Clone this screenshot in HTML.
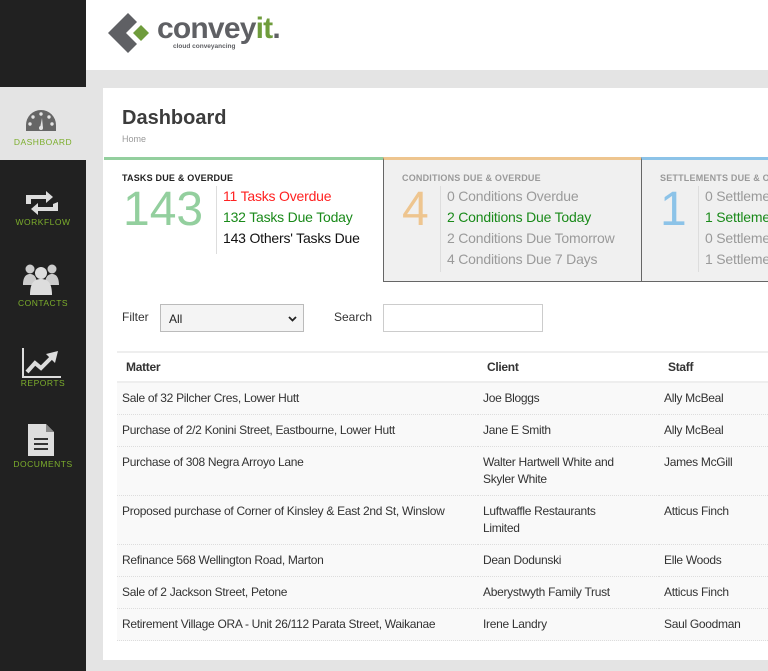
<!DOCTYPE html>
<html><head><meta charset="utf-8"><style>
*{margin:0;padding:0;box-sizing:border-box}
body{width:768px;height:671px;overflow:hidden;background:#e4e4e4;font-family:"Liberation Sans",sans-serif;position:relative}
.a{position:absolute}
#top{left:0;top:0;width:768px;height:70px;background:#fff}
#blk{left:0;top:0;width:86px;height:87px;background:#212121}
#side{left:0;top:160px;width:86px;height:511px;background:#212121}
#act{left:0;top:87px;width:86px;height:73px;background:#e4e4e4}
.nav{position:absolute;left:0;width:86px;text-align:center;font-size:8.5px;color:#7cae2c;letter-spacing:.5px}
#panel{left:103px;top:88px;width:665px;height:572px;background:#fff}
h1{position:absolute;left:122px;top:107px;font-size:20px;color:#3c3c3c;font-weight:bold}
.tab{position:absolute;top:157px;height:125px}
.tt{position:absolute;top:13px;left:18px;font-size:9px;font-weight:bold;letter-spacing:.2px}
.big{position:absolute;font-size:48px;top:22px}
.lst{position:absolute;top:26px;border-left:1px solid #ddd;padding-left:6px;font-size:14px;line-height:21px;letter-spacing:-.2px}
.g{color:#9a9a9a}
td,th{font-size:12px;color:#333;letter-spacing:-.3px;text-align:left;vertical-align:top}
table{position:absolute;left:117px;top:351px;width:651px;border-collapse:collapse}
th{padding:7px 5px 7px 9px;line-height:14px;font-weight:bold;background:#fff;border-top:2px solid #eee;border-bottom:2px solid #eee}
td{background:#f9f9f9;padding:7px 5px;line-height:17px;border-bottom:1px dotted #ddd}
td:nth-child(2){padding-right:40px}
</style></head><body>
<div class="a" id="top"></div>
<div class="a" id="blk"></div>
<div class="a" id="act"></div>
<div class="a" id="side"></div>
<svg class="a" style="left:108px;top:11px" width="46" height="46" viewBox="0 0 46 46">
<polygon points="0,22 20,2 29,11 18,22 29,33 20,42" fill="#5f6064"/>
<polygon points="33,14 41,22 33,30 25,22" fill="#6f9c3c"/>
</svg>
<div class="a" style="left:157px;top:12px;font-size:30px;font-weight:bold;color:#5f6064;letter-spacing:-.8px">convey<span style="color:#6f9c3c">it</span>.</div>
<div class="a" style="left:173px;top:43px;font-size:6.5px;font-weight:bold;color:#5f6064">cloud conveyancing</div>
<svg class="a" style="left:25px;top:109px" width="32" height="24" viewBox="0 0 32 24"><path d="M16 1A15 15 0 0 0 1 16v6h30v-6A15 15 0 0 0 16 1z" fill="#666"/><circle cx="16" cy="5" r="1.7" fill="#e4e4e4"/><circle cx="8" cy="8" r="1.7" fill="#e4e4e4"/><circle cx="24" cy="8" r="1.7" fill="#e4e4e4"/><circle cx="5" cy="15" r="1.7" fill="#e4e4e4"/><circle cx="27" cy="15" r="1.7" fill="#e4e4e4"/><path d="M17 9l-2 10h3z" fill="#e4e4e4"/><circle cx="16" cy="19" r="2" fill="#e4e4e4"/></svg>
<div class="nav" style="top:137px">DASHBOARD</div>
<svg class="a" style="left:24px;top:190px" width="36" height="26" viewBox="0 0 36 26"><path d="M2 14V5h20V1l7 6-7 6V9H7v5z M34 12v9H14v4l-7-6 7-6v4h15v-3z" fill="#ddd"/></svg>
<div class="nav" style="top:217px">WORKFLOW</div>
<svg class="a" style="left:22px;top:263px" width="38" height="32" viewBox="0 0 38 32"><circle cx="8" cy="6" r="4.5" fill="#ccc"/><circle cx="30" cy="6" r="4.5" fill="#ccc"/><path d="M1 22c0-8 3-11 7-11s7 3 7 11z M23 22c0-8 3-11 7-11s7 3 7 11z" fill="#ccc"/><circle cx="19" cy="10" r="6" fill="#ddd"/><path d="M8 32c0-12 4-16 11-16s11 4 11 16z" fill="#ddd"/></svg>
<div class="nav" style="top:298px">CONTACTS</div>
<svg class="a" style="left:22px;top:348px" width="40" height="30" viewBox="0 0 40 30"><path d="M1 0v29h38" stroke="#ddd" stroke-width="2" fill="none"/><path d="M5 24l8-9 6 5 10-10" stroke="#ddd" stroke-width="4" fill="none"/><polygon points="24,6 36,3 33,15" fill="#ddd"/></svg>
<div class="nav" style="top:378px">REPORTS</div>
<svg class="a" style="left:26px;top:424px" width="30" height="32" viewBox="0 0 30 32"><path d="M2 0h18l8 8v24H2z" fill="#ddd"/><path d="M20 0v8h8" fill="#888"/><path d="M8 15h14M8 20h14M8 25h14" stroke="#333" stroke-width="2"/></svg>
<div class="nav" style="top:459px">DOCUMENTS</div>
<div class="a" id="panel"></div>
<h1>Dashboard</h1>
<div class="a" style="left:122px;top:134px;font-size:9px;color:#999">Home</div>
<div class="tab" style="left:104px;width:279px;background:#fff;border-top:3px solid #93cf9e">
<div class="tt" style="color:#222">TASKS DUE &amp; OVERDUE</div>
<div class="big" style="left:19px;color:#93cf9e">143</div>
<div class="lst" style="left:112px;height:68px"><div style="color:#f22">11 Tasks Overdue</div><div style="color:#1a8a1a">132 Tasks Due Today</div><div style="color:#111">143 Others' Tasks Due</div></div>
</div>
<div class="tab" style="left:383px;width:258px;background:#f0f0f0;border-top:3px solid #eec58f;border-left:1px solid #666;border-bottom:1px solid #666">
<div class="tt" style="color:#999">CONDITIONS DUE &amp; OVERDUE</div>
<div class="big" style="left:18px;color:#eec58f">4</div>
<div class="lst g" style="left:56px;height:86px"><div>0 Conditions Overdue</div><div style="color:#1a8a1a">2 Conditions Due Today</div><div>2 Conditions Due Tomorrow</div><div>4 Conditions Due 7 Days</div></div>
</div>
<div class="tab" style="left:641px;width:127px;background:#f0f0f0;border-top:3px solid #8cc3e8;border-left:1px solid #666;border-bottom:1px solid #666;overflow:hidden">
<div class="tt" style="color:#999;white-space:nowrap">SETTLEMENTS DUE &amp; OVERDUE</div>
<div class="big" style="left:18px;color:#8cc3e8">1</div>
<div class="lst g" style="left:56px;height:86px;white-space:nowrap"><div>0 Settlements Overdue</div><div style="color:#1a8a1a">1 Settlements Due Today</div><div>0 Settlements Due Tomorrow</div><div>1 Settlements Due 7 Days</div></div>
</div>
<div class="a" style="left:122px;top:310px;font-size:12px;color:#333">Filter</div>
<div class="a" style="left:160px;top:304px;width:144px;height:28px;border:1px solid #bbb;background:#f4f4f4;font-size:12px;padding:7px 8px;color:#222">All<svg style="position:absolute;right:6px;top:11px" width="9" height="6" viewBox="0 0 9 6"><path d="M1 1l3.5 3.5L8 1" stroke="#222" stroke-width="1.8" fill="none"/></svg></div>
<div class="a" style="left:334px;top:310px;font-size:12px;color:#333">Search</div>
<div class="a" style="left:383px;top:304px;width:160px;height:28px;border:1px solid #ccc;background:#fff"></div>
<table>
<tr><th style="width:361px">Matter</th><th style="width:181px">Client</th><th>Staff</th></tr>
<tr><td>Sale of 32 Pilcher Cres, Lower Hutt</td><td>Joe Bloggs</td><td>Ally McBeal</td></tr>
<tr><td>Purchase of 2/2 Konini Street, Eastbourne, Lower Hutt</td><td>Jane E Smith</td><td>Ally McBeal</td></tr>
<tr><td>Purchase of 308 Negra Arroyo Lane</td><td>Walter Hartwell White and Skyler White</td><td>James McGill</td></tr>
<tr><td>Proposed purchase of Corner of Kinsley &amp; East 2nd St, Winslow</td><td>Luftwaffle Restaurants Limited</td><td>Atticus Finch</td></tr>
<tr><td>Refinance 568 Wellington Road, Marton</td><td>Dean Dodunski</td><td>Elle Woods</td></tr>
<tr><td>Sale of 2 Jackson Street, Petone</td><td>Aberystwyth Family Trust</td><td>Atticus Finch</td></tr>
<tr><td>Retirement Village ORA - Unit 26/112 Parata Street, Waikanae</td><td>Irene Landry</td><td>Saul Goodman</td></tr>
</table>
</body></html>
